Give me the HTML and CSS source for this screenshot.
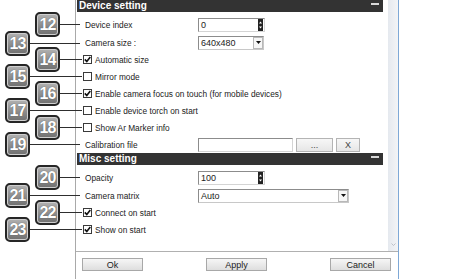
FILE: index.html
```html
<!DOCTYPE html>
<html>
<head>
<meta charset="utf-8">
<link rel="stylesheet" href="styles.css">
</head>
<body>
<div class="page">
  <div class="gutter"></div>
  <div class="panel">
    <div class="scroll">
      <div class="content">
        <div class="section-head"><span>Device setting</span><i class="collapse"></i></div>
        <div class="rows top-rows">
          <div class="row h18"><span class="lbl">Device index</span>
            <div class="input w67"><span class="val">0</span>
              <svg class="spinner" width="5" height="12" viewBox="0 0 5 12"><rect width="5" height="12" fill="#222"/><path d="M1 4.5 L2.5 2.5 L4 4.5Z M1 7.5 L2.5 9.5 L4 7.5Z" fill="#fff"/></svg>
            </div>
          </div>
          <div class="row h17"><span class="lbl">Camera size :</span>
            <div class="input select w66"><span class="val">640x480</span>
              <span class="drop"><svg width="5" height="3" viewBox="0 0 5 3"><path d="M0 0 L5 0 L2.5 3Z" fill="#111"/></svg></span>
            </div>
          </div>
          <div class="row h17 chk-row"><span class="chk on"><svg width="7" height="7" viewBox="0 0 7 7"><path d="M0.8 3.4 L2.8 5.6 L6.3 1" fill="none" stroke="#111" stroke-width="1.6"/></svg></span><span>Automatic size</span></div>
          <div class="row h17 chk-row"><span class="chk"></span><span>Mirror mode</span></div>
          <div class="row h17 chk-row"><span class="chk on"><svg width="7" height="7" viewBox="0 0 7 7"><path d="M0.8 3.4 L2.8 5.6 L6.3 1" fill="none" stroke="#111" stroke-width="1.6"/></svg></span><span>Enable camera focus on touch (for mobile devices)</span></div>
          <div class="row h17 chk-row"><span class="chk"></span><span>Enable device torch on start</span></div>
          <div class="row h17 chk-row"><span class="chk"></span><span>Show Ar Marker info</span></div>
          <div class="row h17"><span class="lbl">Calibration file</span>
            <div class="input w95"></div>
            <span class="sbtn w37">...</span>
            <span class="sbtn w24">X</span>
          </div>
        </div>
        <div class="section-head"><span>Misc setting</span><i class="collapse"></i></div>
        <div class="rows misc-rows">
          <div class="row h18"><span class="lbl">Opacity</span>
            <div class="input w67"><span class="val">100</span>
              <svg class="spinner" width="5" height="12" viewBox="0 0 5 12"><rect width="5" height="12" fill="#222"/><path d="M1 4.5 L2.5 2.5 L4 4.5Z M1 7.5 L2.5 9.5 L4 7.5Z" fill="#fff"/></svg>
            </div>
          </div>
          <div class="row h17"><span class="lbl">Camera matrix</span>
            <div class="input select w151"><span class="val">Auto</span>
              <span class="drop"><svg width="5" height="3" viewBox="0 0 5 3"><path d="M0 0 L5 0 L2.5 3Z" fill="#111"/></svg></span>
            </div>
          </div>
          <div class="row h17 chk-row"><span class="chk on"><svg width="7" height="7" viewBox="0 0 7 7"><path d="M0.8 3.4 L2.8 5.6 L6.3 1" fill="none" stroke="#111" stroke-width="1.6"/></svg></span><span>Connect on start</span></div>
          <div class="row h17 chk-row"><span class="chk on"><svg width="7" height="7" viewBox="0 0 7 7"><path d="M0.8 3.4 L2.8 5.6 L6.3 1" fill="none" stroke="#111" stroke-width="1.6"/></svg></span><span>Show on start</span></div>
        </div>
      </div>
      <div class="scrollbar">
        <svg class="down" width="5" height="3" viewBox="0 0 5 3"><path d="M0.5 0.5 L2.5 2.5 L4.5 0.5" fill="none" stroke="#b8bcc4" stroke-width="0.9"/></svg>
      </div>
    </div>
    <div class="footer">
      <span class="btn">Ok</span>
      <span class="btn">Apply</span>
      <span class="btn">Cancel</span>
    </div>
  </div>

  <div class="lead l12"></div><div class="badge b12">12</div>
  <div class="lead l13"></div><div class="badge b13">13</div>
  <div class="lead l14"></div><div class="badge b14">14</div>
  <div class="lead l15"></div><div class="badge b15">15</div>
  <div class="lead l16"></div><div class="badge b16">16</div>
  <div class="lead l17"></div><div class="badge b17">17</div>
  <div class="lead l18"></div><div class="badge b18">18</div>
  <div class="lead l19"></div><div class="badge b19">19</div>
  <div class="lead l20"></div><div class="badge b20">20</div>
  <div class="lead l21"></div><div class="badge b21">21</div>
  <div class="lead l22"></div><div class="badge b22">22</div>
  <div class="lead l23"></div><div class="badge b23">23</div>
</div>
</body>
</html>
```

FILE: styles.css
```css
html, body { margin: 0; padding: 0; }
body {
  width: 474px; height: 279px; overflow: hidden; background: #fff;
  font-family: "Liberation Sans", Arial, sans-serif; font-size: 8.3px; color: #222;
}
.page { display: flex; height: 279px; position: relative; }
.gutter { width: 75px; flex: none; }
.panel {
  width: 322px; flex: none;
  border-left: 1px solid #a9a9a9; border-right: 1px solid #7ea8d6;
  display: flex; flex-direction: column;
}
.scroll { height: 251px; display: flex; flex: none; }
.content { width: 312px; flex: none; }
.scrollbar {
  width: 10px; flex: none; position: relative;
  background: linear-gradient(to right, #e5e9ef, #f3f4f6);
}
.scrollbar .down { position: absolute; left: 3px; bottom: 5px; }

.section-head {
  margin: 0 5px 0 1px; height: 12px; background: #333;
  color: #fff; font-weight: bold; font-size: 10px; line-height: 12px;
  padding-left: 2px; display: flex; justify-content: space-between;
}
.collapse {
  display: block; width: 8px; height: 2px; background: #d8d8d8;
  margin: 3px 4px 0 0;
}
.top-rows { padding-top: 4px; }
.misc-rows { padding-top: 4px; }
.row { display: flex; align-items: center; }
.h17 { height: 17px; }
.h18 { height: 18px; }
.lbl { width: 113px; padding-left: 9px; flex: none; }
.chk-row { padding-left: 7px; gap: 3px; }
.chk {
  width: 9px; height: 9px; box-sizing: border-box; border: 1px solid #3a3a3a;
  background: #fff; display: flex; align-items: center; justify-content: center; flex: none;
}

.input {
  height: 14px; box-sizing: border-box; background: #fff;
  border: 1px solid; border-color: #8c8c8c #d4d4d4 #d4d4d4 #8c8c8c;
  display: flex; align-items: center; font-size: 9px; flex: none;
}
.input .val { flex: 1; padding-left: 2px; }
.spinner { margin-right: 1px; display: block; }
.select { border-color: #8c8c8c #c8c8c8 #c8c8c8 #8c8c8c; }
.drop {
  width: 10px; height: 12px; box-sizing: border-box; border: 1px solid #b8b8b8;
  background: #f6f6f6; display: flex; align-items: center; justify-content: center;
}
.w67 { width: 67px; }
.w66 { width: 66px; }
.w95 { width: 95px; }
.w151 { width: 151px; }
.sbtn {
  height: 14px; box-sizing: border-box; margin-left: 3px; flex: none;
  border: 1px solid #b4b4b4; background: linear-gradient(#f7f7f7, #e6e6e6);
  display: flex; align-items: center; justify-content: center; font-size: 9px; color: #444;
}
.w37 { width: 37px; }
.w24 { width: 24px; }

.footer {
  border-top: 1px solid #b0b0b0; flex: 1;
  display: flex; justify-content: space-between; align-items: flex-start;
  padding: 6px 7px 0 6px;
}
.btn {
  width: 61px; height: 13px; box-sizing: border-box;
  border: 1px solid #a8a8a8; background: linear-gradient(#f6f6f6, #dedede);
  display: flex; align-items: center; justify-content: center; font-size: 9px; color: #222;
}

.badge {
  position: absolute; width: 25px; height: 25px; box-sizing: border-box;
  border: 2px solid #262626; border-radius: 5px;
  background: linear-gradient(#b2b2b2, #6f6f6f);
  box-shadow: inset 0 0 0 1px #cfcfcf;
  color: #fff; font: bold 16px/21px "Liberation Sans", Arial, sans-serif;
  letter-spacing: -1px; text-align: center; text-shadow: 0 0 1px #444;
}
.lead { position: absolute; height: 1px; background: #2e2e2e; }
.b12, .b14, .b16, .b18, .b20, .b22 { left: 35px; }
.b13, .b15, .b17, .b19, .b21, .b23 { left: 5px; }
.l12, .l20 { left: 60px; width: 20px; }
.l14, .l16, .l18, .l22 { left: 60px; width: 22px; }
.l13, .l19, .l21 { left: 30px; width: 50px; }
.l15, .l17, .l23 { left: 30px; width: 52px; }
.b12 { top: 12px; } .l12 { top: 24px; }
.b13 { top: 31px; } .l13 { top: 43px; }
.b14 { top: 47px; } .l14 { top: 59px; }
.b15 { top: 64px; } .l15 { top: 76px; }
.b16 { top: 81px; } .l16 { top: 93px; }
.b17 { top: 98px; } .l17 { top: 110px; }
.b18 { top: 115px; } .l18 { top: 127px; }
.b19 { top: 132px; } .l19 { top: 144px; }
.b20 { top: 165px; } .l20 { top: 177px; }
.b21 { top: 183px; } .l21 { top: 195px; }
.b22 { top: 200px; } .l22 { top: 212px; }
.b23 { top: 217px; } .l23 { top: 229px; }
```
